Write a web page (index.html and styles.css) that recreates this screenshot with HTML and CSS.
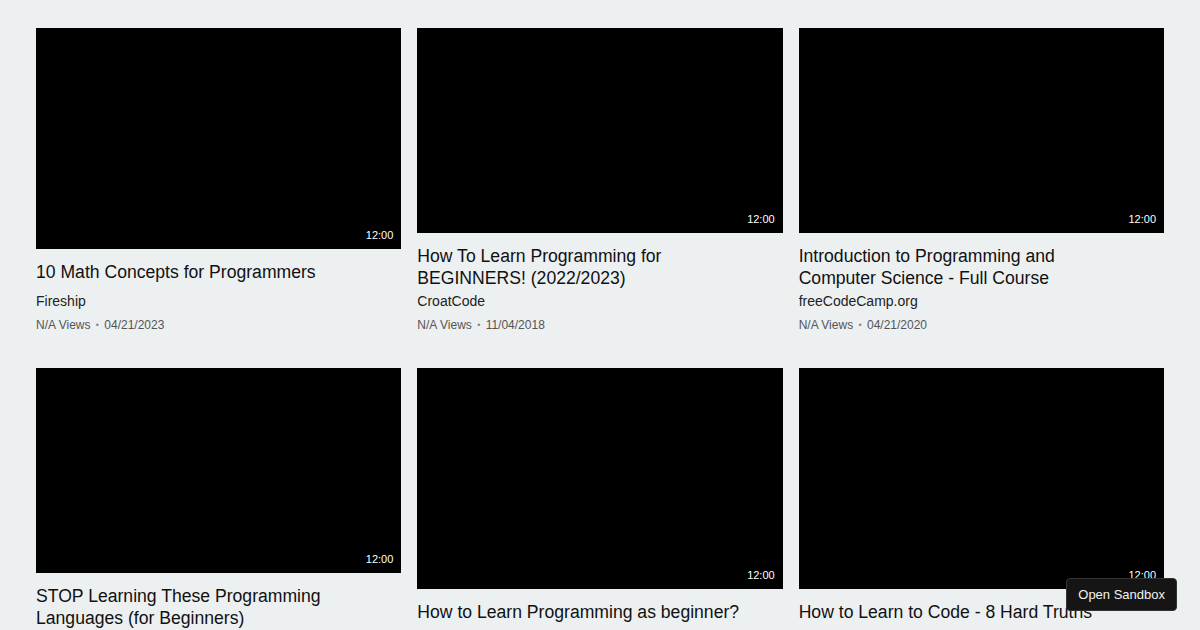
FILE: index.html
```html
<!DOCTYPE html>
<html lang="en">

<head>
    <meta charset="UTF-8">
    <meta name="viewport" content="width=device-width, initial-scale=1.0">
    <title>Videos</title>
    <link rel="stylesheet" href="styles.css">
</head>

<body>
    <div class="video-list">
        <div class="video-card">
            <div class="thumb"><span class="duration">12:00</span></div>
            <div class="title">10 Math Concepts for Programmers</div>
            <div class="channel">Fireship</div>
            <div class="meta">N/A Views <span class="dot">&bull;</span> 04/21/2023</div>
        </div>
        <div class="video-card">
            <div class="thumb"><span class="duration">12:00</span></div>
            <div class="title">How To Learn Programming for BEGINNERS! (2022/2023)</div>
            <div class="channel">CroatCode</div>
            <div class="meta">N/A Views <span class="dot">&bull;</span> 11/04/2018</div>
        </div>
        <div class="video-card">
            <div class="thumb"><span class="duration">12:00</span></div>
            <div class="title">Introduction to Programming and Computer Science - Full Course</div>
            <div class="channel">freeCodeCamp.org</div>
            <div class="meta">N/A Views <span class="dot">&bull;</span> 04/21/2020</div>
        </div>
        <div class="video-card">
            <div class="thumb"><span class="duration">12:00</span></div>
            <div class="title">STOP Learning These Programming Languages (for Beginners)</div>
            <div class="channel">Andy Sterkowitz</div>
            <div class="meta">N/A Views <span class="dot">&bull;</span> 04/21/2023</div>
        </div>
        <div class="video-card">
            <div class="thumb"><span class="duration">12:00</span></div>
            <div class="title">How to Learn Programming as beginner?</div>
            <div class="channel">Programming with Mosh</div>
            <div class="meta">N/A Views <span class="dot">&bull;</span> 04/21/2023</div>
        </div>
        <div class="video-card">
            <div class="thumb"><span class="duration">12:00</span></div>
            <div class="title">How to Learn to Code - 8 Hard Truths</div>
            <div class="channel">Web Dev Simplified</div>
            <div class="meta">N/A Views <span class="dot">&bull;</span> 04/21/2023</div>
        </div>
    </div>

    <button class="sandbox-btn">Open Sandbox</button>
</body>

</html>
```

FILE: styles.css
```css
* {
    margin: 0;
    padding: 0;
    box-sizing: border-box;
}

body {
    background-color: #ecf0f1;
    font-family: "Liberation Sans", Arial, sans-serif;
    color: #111;
}

.video-list {
    display: grid;
    grid-template-columns: repeat(3, 1fr);
    column-gap: 16px;
    row-gap: 36px;
    padding: 28px 36px;
}

.video-card {
    display: flex;
    flex-direction: column;
}

.thumb {
    flex: 8 0 205px;
    background-color: #000;
    position: relative;
}

.duration {
    position: absolute;
    right: 8px;
    bottom: 7px;
    color: #fff;
    font-size: 11px;
    line-height: 13px;
}

.title {
    flex: 3 0 auto;
    margin-top: 12px;
    padding-right: 30px;
    padding-bottom: 4px;
    font-size: 17.6px;
    line-height: 22px;
}

.channel {
    font-size: 14px;
    line-height: 17px;
    color: #222;
}

.meta {
    margin-top: 8px;
    font-size: 12px;
    line-height: 14px;
    color: #555;
}

.dot {
    font-size: 9px;
    color: #888;
    margin: 0 2px;
    vertical-align: 1px;
}

.sandbox-btn {
    position: fixed;
    right: 23px;
    bottom: 19px;
    height: 33px;
    padding: 0 11px;
    background-color: #151515;
    color: #f2f2f2;
    border: 1px solid #333;
    border-radius: 4px;
    font-family: "Liberation Sans", Arial, sans-serif;
    font-size: 13px;
}
```
